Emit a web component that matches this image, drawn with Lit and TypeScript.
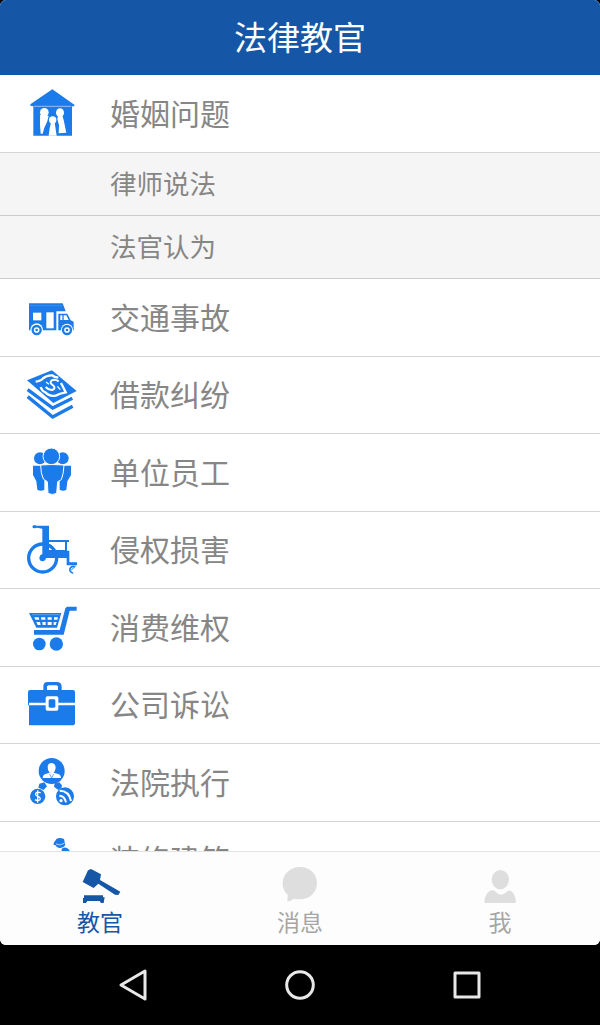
import { LitElement, html, svg, css } from "lit";
import { customElement } from "lit/decorators.js";
import { classMap } from "lit/directives/class-map.js";

const house = svg`
  <path d="M127 28 L193 74 L193 79 L186 79 L186 167 L70 167 L70 79 L61 77 L61 73 Z"/>
  <path d="M72 79H184" stroke="#a9cdf8" stroke-width="2.5"/>
  <g fill="#fff">
    <ellipse cx="103" cy="97" rx="13" ry="13"/>
    <path d="M90 106 Q102 100 116 108 L112 124 L103 143 L98 161 H92 L90 135 Z"/>
    <ellipse cx="150" cy="98" rx="12" ry="13"/>
    <path d="M144 106 H157 L161 120 L169 158 L146 160 L147 135 L142 118 Z"/>
    <circle cx="128" cy="120" r="11"/>
    <path d="M123 128 H134 L140 167 H116 L119 145 Z"/>
  </g>`;

const truck = svg`
  <path d="M57 40 H158 L167 64 H139 V121 H57 Z"/>
  <path d="M145 71 H172 L182 91 L191 95 V121 H145 Z"/>
  <g fill="#fff">
    <rect x="69" y="68" width="25" height="23"/>
    <rect x="109" y="67" width="22" height="48"/>
    <path d="M151 76 H157 V90 H151 Z M161 76 H169 L176 90 H161 Z"/>
    <circle cx="80" cy="119" r="19"/><circle cx="171" cy="119" r="18"/>
  </g>
  <circle cx="80" cy="120" r="12" fill="#fff" stroke="#1b7bea" stroke-width="7"/>
  <circle cx="171" cy="120" r="12" fill="#fff" stroke="#1b7bea" stroke-width="7"/>
  <circle cx="80" cy="120" r="4"/><circle cx="171" cy="120" r="4"/>
  <path d="M57 47H158" stroke="#5ca0f2" stroke-width="1.5"/>`;

const money = svg`
  <path d="M51 55 L126 25 L200 87 L130 123 Z"/>
  <g fill="none" stroke="#fff">
    <path d="M77 59 Q93 57 98 50 Q110 39 127 40 Q132 45 145 47" stroke-width="7"/>
    <path d="M92 75 Q96 88 106 91 Q117 104 137 101 Q148 94 167 91 Q159 74 153 63" stroke-width="7"/>
    <path d="M146 58 Q135 50 125 55 Q117 64 129 70 Q139 79 127 84 Q116 85 107 75" stroke-width="6"/>
    <path d="M108 60 L117 67 M142 73 L151 83" stroke-width="4"/>
  </g>
  <g fill="none" stroke="#1b7bea" stroke-width="10" stroke-linejoin="miter">
    <path d="M53 83 L128 138 L187 109"/>
    <path d="M53 104 L128 165 L188 133"/>
  </g>`;

const people = svg`
  <circle cx="90" cy="55" r="18"/><circle cx="158" cy="55" r="18"/>
  <path d="M69 77 H92 L96 108 L103 119 V149 Q92 155 82 149 L79 124 L69 105 Z"/>
  <path d="M183 77 H160 L156 108 L149 119 V149 Q160 155 169 149 L172 124 L183 105 Z"/>
  <circle cx="124" cy="49" r="25" stroke="#fff" stroke-width="3"/>
  <path d="M92 75 Q124 72 162 75 Q161 102 154 119 L143 125 L140 160 Q127 167 114 160 L112 125 L100 117 Q92 100 92 75 Z" stroke="#fff" stroke-width="3"/>`;

const wheelchair = svg`
  <circle cx="98" cy="129" r="42" fill="none" stroke="#1b7bea" stroke-width="10"/>
  <path d="M67 35 Q67 30 75 30 L79 32 H117 V75 H177 V81 H171 V107 H178 V142 H201 V151 H170 V129 H108 Q106 139 97 139 Q88 137 88 128 Q89 119 97 117 V41 L81 38 L75 40 Q67 40 67 35 Z M117 81 V105 H165 V81 Z" fill-rule="evenodd"/>
  <path d="M194 155 A10 10 0 1 0 190 174" fill="none" stroke="#1b7bea" stroke-width="5"/>
  <path d="M184 165 L197 153" stroke="#1b7bea" stroke-width="3"/>`;

const cart = svg`
  <path d="M57 54 H154 L141 98 H79 Z"/>
  <path d="M66 59 H150" stroke="#9ac4f7" stroke-width="1.5"/>
  <g fill="#fff">
    <path d="M73 67 H86 L88 74 H76 Z M93 67 H106 V74 H94 Z M113 67 H125 V74 H113 Z M132 67 H144 L142 74 H132 Z"/>
    <path d="M79 81 H90 L92 90 H83 Z M97 81 H107 V90 H98 Z M113 81 H125 V90 H113 Z M131 81 H140 L137 90 H131 Z"/>
  </g>
  <path d="M72 105 H149 L166 40 L171 35 H200 V47 H179 L161 119 H72 Z"/>
  <circle cx="88" cy="147" r="19"/><circle cx="139" cy="147" r="20"/>`;

const briefcase = svg`
  <path d="M100 54 V43 Q100 30 113 30 H142 Q155 31 155 44 V54 H144 V43 L140 40 H116 L111 43 V54 Z"/>
  <path d="M60 54 H189 Q195 54 195 60 V155 L191 160 H57 V100 H54 V61 Q54 54 60 54 Z"/>
  <path d="M57 96 H195" stroke="#fff" stroke-width="8"/>
  <rect x="107" y="73" width="38" height="43" rx="5" fill="#fff"/>
  <rect x="116" y="82" width="20" height="25" rx="4"/>`;

const network = svg`
  <circle cx="125" cy="63" r="39"/>
  <path d="M125 39 Q137 40 137 54 Q135 64 131 68 L147 73 Q153 77 153 84 H98 Q98 76 104 73 L119 68 Q112 61 113 49 Q115 39 125 39 Z" fill="#fff"/>
  <path d="M119 72 L125 84 L131 72" fill="none" stroke="#1b7bea" stroke-width="2"/>
  <path d="M88 101 L103 97 L111 109 L101 120 L85 113 Z M134 100 L148 97 L156 106 L154 115 L145 120 L132 110 Z"/>
  <circle cx="83" cy="139" r="23"/>
  <path d="M92 129 Q84 124 78 129 Q74 136 84 139 Q94 144 89 150 Q82 154 75 149 M83 121 V158" fill="none" stroke="#fff" stroke-width="4"/>
  <circle cx="165" cy="139" r="27"/>
  <g fill="none" stroke="#fff" stroke-width="6">
    <path d="M149 122 Q177 122 183 153 M148 137 Q164 138 168 157"/>
  </g>
  <circle cx="153" cy="152" r="5" fill="#fff"/>`;

const builder = svg`
  <path d="M161 69 L170 56 Q180 52 192 57 L196 75 Q190 85 180 84 Q169 83 167 76 L161 75 Z"/>
  <path d="M168 72 L180 75 L194 69" fill="none" stroke="#fff" stroke-width="2"/>
  <path d="M185 86 Q199 77 208 90 L216 115 L185 130 Z"/>`;

interface Row {
  label: string;
  view?: string;
  icon?: unknown;
}

const ROWS: Row[] = [
  { label: "婚姻问题", icon: house, view: "0 -15 270 231" },
  { label: "律师说法" },
  { label: "法官认为" },
  { label: "交通事故", icon: truck, view: "0 -33 270 231" },
  { label: "借款纠纷", icon: money, view: "0 -15 270 231" },
  { label: "单位员工", icon: people, view: "0 -18 270 231" },
  { label: "侵权损害", icon: wheelchair, view: "0 -9 270 231" },
  { label: "消费维权", icon: cart, view: "0 -18 270 231" },
  { label: "公司诉讼", icon: briefcase, view: "0 -15 270 231" },
  { label: "法院执行", icon: network, view: "0 -18 270 231" },
  { label: "装修建筑", icon: builder, view: "30 6 270 231" },
];

const gavel = svg`
  <path d="M273 147 L303 163 L300 180 L361 215 L355 225 L345 224 L295 191 L281 204 L248 186 L264 151 Z"/>
  <path d="M252 226 H309 V232 H314 L311 249 H303 L299 243 H262 L258 249 H249 V234 H252 Z"/>`;

const bubble = svg`
  <path d="M900 141 C930 141 951 162 951 189 C951 217 929 238 900 238 Q890 238 881 236 Q873 243 862 245 Q863 235 863 224 C852 215 848 203 848 190 C848 162 871 141 900 141 Z"/>`;

const person = svg`
  <ellipse cx="1501" cy="179" rx="26" ry="29"/>
  <path d="M1453 247 Q1454 222 1470 212 Q1480 208 1487 215 Q1501 232 1517 218 Q1526 208 1533 213 Q1546 222 1548 247 L1546 249 H1455 Z"/>`;

const TABS = [
  { label: "教官", icon: gavel, view: "240 135 120 120", active: true },
  { label: "消息", icon: bubble, view: "840 135 120 120", active: false },
  { label: "我", icon: person, view: "1440 135 120 120", active: false },
];

@customElement("app-root")
export class AppRoot extends LitElement {
  static styles = css`
    :host {
      display: block;
      background: #000;
      font-family: "Noto Sans CJK SC", sans-serif;
    }
    .screen {
      height: 1025px;
      display: flex;
      flex-direction: column;
      overflow: hidden;
    }
    .app {
      height: 945px;
      display: flex;
      flex-direction: column;
      border-radius: 6px;
      overflow: hidden;
      background: #fff;
    }
    .header {
      flex: none;
      box-sizing: border-box;
      height: 75px;
      padding-bottom: 4px;
      display: flex;
      align-items: center;
      justify-content: center;
      background: #1557a6;
      color: #fff;
      font-size: 33px;
      line-height: 48px;
    }
    .list {
      flex: 1;
      min-height: 0;
      overflow: hidden;
    }
    .row {
      box-sizing: border-box;
      height: 77px;
      display: flex;
      align-items: center;
      border-bottom: 1px solid #d4d4d4;
      color: #868686;
      font-size: 30px;
      line-height: 44px;
    }
    .row:nth-child(even),
    .row:first-child {
      height: 78px;
    }
    .label {
      padding-bottom: 4px;
    }
    .row.sub {
      height: 63px;
      padding-left: 110px;
      background: #f5f5f5;
      border-bottom-color: #cbcbcb;
      font-size: 26.5px;
      line-height: 40px;
    }
    .sub .label {
      padding-bottom: 2px;
    }
    .icon {
      flex: none;
      align-self: flex-start;
      width: 90px;
      height: 77px;
      margin: 0 10px;
      fill: #1b7bea;
    }
    .tabs {
      flex: none;
      box-sizing: border-box;
      height: 94px;
      display: grid;
      grid-template-columns: repeat(3, 1fr);
      border-top: 1px solid #e2e2e2;
      background: #fdfdfd;
    }
    .tab {
      display: flex;
      flex-direction: column;
      align-items: center;
      padding-top: 13px;
      color: #a6a6a6;
      fill: #dedede;
      font-size: 23px;
      line-height: 32px;
    }
    .tab.active {
      color: #1557a6;
      fill: #1557a6;
    }
    .glyph {
      width: 40px;
      height: 40px;
      overflow: visible;
    }
    .nav {
      flex: 1;
      display: grid;
      grid-template-columns: repeat(3, 167px);
      justify-content: center;
      align-items: center;
      justify-items: center;
    }
    .key {
      width: 40px;
      height: 40px;
      fill: none;
      stroke: #e8e8e8;
      stroke-width: 3;
      stroke-linejoin: round;
    }
  `;

  render() {
    return html`
      <div class="screen">
        <div class="app">
          <header class="header">法律教官</header>
          <main class="list">
            ${ROWS.map(
              (r) => html`<div class=${classMap({ row: true, sub: !r.icon })}>
                ${r.icon
                  ? html`<svg class="icon" viewBox=${r.view!}>${r.icon}</svg>`
                  : null}
                <span class="label">${r.label}</span>
              </div>`
            )}
          </main>
          <nav class="tabs">
            ${TABS.map(
              (t) => html`<div class=${classMap({ tab: true, active: t.active })}>
                <svg class="glyph" viewBox=${t.view}>${t.icon}</svg>
                <span>${t.label}</span>
              </div>`
            )}
          </nav>
        </div>
        <div class="nav">
          <svg class="key" viewBox="0 0 40 40"><path d="M8 20 L32 6 V34 Z"/></svg>
          <svg class="key" viewBox="0 0 40 40"><circle cx="20" cy="20" r="13.3"/></svg>
          <svg class="key" viewBox="0 0 40 40"><rect x="8" y="8" width="24" height="24"/></svg>
        </div>
      </div>
    `;
  }
}
